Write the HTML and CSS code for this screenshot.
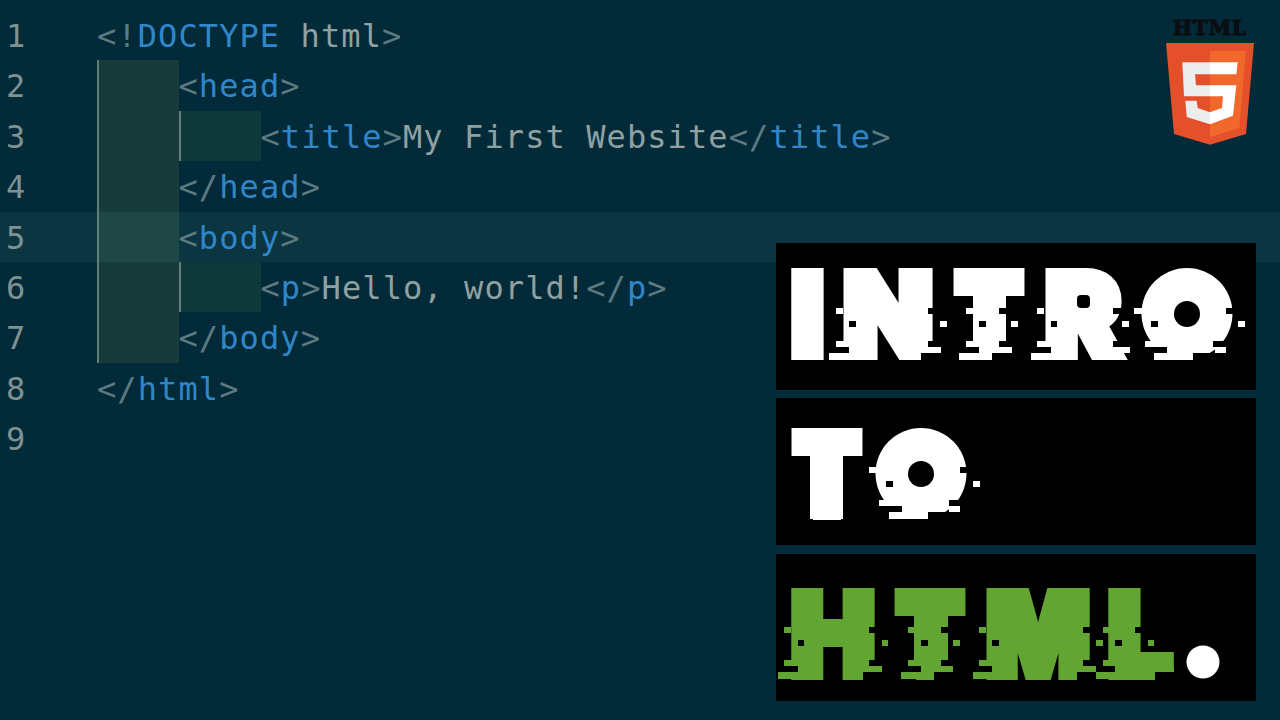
FILE: index.html
```html
<!DOCTYPE html>
<html lang="en">
<head>
<meta charset="utf-8">
<title>Intro to HTML</title>
<link rel="stylesheet" href="styles.css">
</head>
<body>
<main class="editor">
  <div class="line"><span class="num">1</span><span class="code"><i class="p">&lt;!</i><b>DOCTYPE</b><i class="t"> html</i><i class="p">&gt;</i></span></div>
  <div class="line"><span class="num">2</span><span class="code"><span class="ind outer"></span><i class="p">&lt;</i><b>head</b><i class="p">&gt;</i></span></div>
  <div class="line"><span class="num">3</span><span class="code"><span class="ind outer"></span><span class="ind inner"></span><i class="p">&lt;</i><b>title</b><i class="p">&gt;</i><i class="t">My First Website</i><i class="p">&lt;/</i><b>title</b><i class="p">&gt;</i></span></div>
  <div class="line"><span class="num">4</span><span class="code"><span class="ind outer"></span><i class="p">&lt;/</i><b>head</b><i class="p">&gt;</i></span></div>
  <div class="line current"><span class="num">5</span><span class="code"><span class="ind outer"></span><i class="p">&lt;</i><b>body</b><i class="p">&gt;</i></span></div>
  <div class="line"><span class="num">6</span><span class="code"><span class="ind outer"></span><span class="ind inner"></span><i class="p">&lt;</i><b>p</b><i class="p">&gt;</i><i class="t">Hello, world!</i><i class="p">&lt;/</i><b>p</b><i class="p">&gt;</i></span></div>
  <div class="line"><span class="num">7</span><span class="code"><span class="ind outer"></span><i class="p">&lt;/</i><b>body</b><i class="p">&gt;</i></span></div>
  <div class="line"><span class="num">8</span><span class="code"><i class="p">&lt;/</i><b>html</b><i class="p">&gt;</i></span></div>
  <div class="line"><span class="num">9</span><span class="code"></span></div>
</main>

<aside class="logo">
  <div class="logo-text">HTML</div>
  <svg class="shield" viewBox="18 10 264 306" aria-hidden="true">
    <path fill="#E4502A" d="M18 10H282L258 283 150 315 42 283Z"/>
    <path fill="#F0682C" d="M150 33H258L238 265 150 292Z"/>
    <path fill="#EDEDED" d="M67 68H150V104H105L108 137H150V170H72ZM76 183H110L113 205 150 218V254L80 232Z"/>
    <path fill="#FFF" d="M150 68H233L229 104H150ZM150 137H229L219 228 150 254V218L186 205 189 170H150Z"/>
  </svg>
</aside>

<section class="banners">
  <div class="banner first">
    <div class="word">
      <span class="ltr l-i">I</span><span class="ltr l-n">N</span><span class="ltr l-t">T</span><span class="ltr l-r">R</span><span class="ltr l-o">O</span>
    </div>
    <svg class="glitch" viewBox="776 243 480 147" aria-hidden="true">
      <circle cx="1187" cy="313.500" r="45.500" fill="#fff"/>
      <circle cx="1187" cy="314" r="13" fill="#000"/>
      <rect x="1140" y="353" width="14" height="8" fill="#000"/><rect x="1193" y="353" width="45" height="8" fill="#000"/>
      <rect x="1077" y="295" width="13" height="13" rx="4" fill="#000"/>
      <g fill="#fff">
        <rect x="973" y="290" width="33" height="70"/>
        <rect x="836" y="308" width="7" height="6"/><rect x="940" y="321" width="7" height="6"/><rect x="836" y="341" width="13" height="6"/><rect x="829" y="353" width="20" height="7"/><rect x="921" y="347" width="20" height="6"/>
        <rect x="966" y="308" width="7" height="6"/><rect x="1011" y="321" width="7" height="6"/><rect x="966" y="341" width="13" height="6"/><rect x="959" y="353" width="20" height="7"/><rect x="992" y="347" width="20" height="6"/>
        <rect x="1037" y="308" width="7" height="6"/><rect x="1122" y="321" width="7" height="6"/><rect x="1037" y="341" width="13" height="6"/><rect x="1031" y="353" width="20" height="7"/><rect x="1110" y="347" width="20" height="6"/>
        <rect x="1134" y="308" width="8" height="6"/><rect x="1238" y="321" width="7" height="6"/><rect x="1145" y="341" width="22" height="6"/><rect x="1154" y="353" width="39" height="7"/><rect x="1215" y="347" width="11" height="6"/>
      </g>
      <g fill="#000">
        <rect x="849" y="321" width="7" height="6"/><rect x="928" y="308" width="6" height="6"/><rect x="928" y="341" width="6" height="6"/><rect x="843" y="347" width="6" height="6"/><rect x="921" y="353" width="20" height="8"/>
        <rect x="979" y="321" width="7" height="6"/><rect x="999" y="308" width="7" height="6"/><rect x="999" y="341" width="7" height="6"/><rect x="973" y="347" width="6" height="6"/><rect x="992" y="353" width="20" height="8"/>
        <rect x="1051" y="321" width="6" height="6"/><rect x="1113" y="308" width="9" height="6"/><rect x="1113" y="341" width="9" height="6"/><rect x="1044" y="347" width="7" height="6"/>
        <rect x="1151" y="321" width="7" height="6"/><rect x="1226" y="308" width="8" height="6"/><rect x="1213" y="341" width="13" height="6"/><rect x="1152" y="347" width="15" height="6"/>
      </g>
    </svg>
  </div>
  <div class="banner">
    <div class="word">
      <span class="ltr l-t2">T</span><span class="ltr l-o2">O</span>
    </div>
    <svg class="glitch" viewBox="776 398 480 147" aria-hidden="true">
      <circle cx="921" cy="473.500" r="45.500" fill="#fff"/>
      <circle cx="921" cy="474" r="13" fill="#000"/>
      <rect x="870" y="512" width="19" height="9" fill="#000"/><rect x="928" y="512" width="44" height="9" fill="#000"/>
      <g fill="#fff"><rect x="810" y="450" width="33" height="69"/><rect x="869" y="467" width="7" height="6"/><rect x="973" y="481" width="7" height="6"/><rect x="879" y="500" width="23" height="6"/><rect x="889" y="512" width="39" height="7"/><rect x="949" y="506" width="11" height="6"/></g>
      <g fill="#000"><rect x="886" y="481" width="7" height="6"/><rect x="960" y="467" width="7" height="6"/><rect x="949" y="500" width="13" height="6"/><rect x="889" y="506" width="13" height="6"/></g>
    </svg>
  </div>
  <div class="banner">
    <div class="word">
      <span class="ltr green l-h">H</span><span class="ltr green l-t3">T</span><span class="ltr green l-m">M</span><span class="ltr green l-l">L</span>
    </div>
    <svg class="glitch" viewBox="776 554 480 147" aria-hidden="true">
      <circle cx="1203" cy="662" r="16.500" fill="#fff"/>
      <g fill="#63a533">
        <rect x="914" y="610" width="34" height="69"/>
        <rect x="784" y="627" width="7" height="6"/><rect x="882" y="640" width="6" height="6"/><rect x="784" y="660" width="14" height="6"/><rect x="778" y="672" width="20" height="7"/><rect x="863" y="666" width="19" height="6"/>
        <rect x="908" y="627" width="6" height="6"/><rect x="953" y="640" width="7" height="6"/><rect x="908" y="660" width="13" height="6"/><rect x="901" y="672" width="20" height="7"/><rect x="934" y="666" width="19" height="6"/>
        <rect x="979" y="627" width="7" height="6"/><rect x="1096" y="640" width="7" height="6"/><rect x="979" y="660" width="13" height="6"/><rect x="973" y="672" width="19" height="7"/><rect x="1077" y="666" width="19" height="6"/>
        <rect x="1103" y="627" width="6" height="6"/><rect x="1148" y="640" width="6" height="6"/><rect x="1103" y="660" width="12" height="6"/><rect x="1096" y="672" width="19" height="7"/>
        <rect x="1142" y="653" width="26" height="7"/><rect x="1142" y="660" width="19" height="6"/><rect x="1142" y="666" width="32" height="6"/><rect x="1115" y="672" width="40" height="7"/>
      </g>
      <g fill="#000">
        <rect x="798" y="640" width="6" height="6"/><rect x="869" y="627" width="6" height="6"/><rect x="869" y="660" width="6" height="6"/><rect x="791" y="666" width="7" height="6"/><rect x="863" y="672" width="14" height="8"/>
        <rect x="921" y="640" width="7" height="6"/><rect x="941" y="627" width="7" height="6"/><rect x="941" y="660" width="7" height="6"/><rect x="914" y="666" width="7" height="6"/><rect x="934" y="672" width="16" height="8"/>
        <rect x="992" y="640" width="7" height="6"/><rect x="1083" y="627" width="7" height="6"/><rect x="1083" y="660" width="7" height="6"/><rect x="986" y="666" width="6" height="6"/><rect x="1077" y="672" width="19" height="8"/>
        <rect x="1115" y="640" width="7" height="6"/><rect x="1135" y="627" width="7" height="6"/><rect x="1096" y="666" width="19" height="6"/>
        <rect x="1155" y="672" width="24" height="8"/>
      </g>
    </svg>
  </div>
</section>
</body>
</html>
```

FILE: styles.css
```css
* { box-sizing: border-box; }
html, body { margin: 0; height: 100%; }
body {
  width: 1280px;
  height: 720px;
  overflow: hidden;
  position: relative;
  background: #022a38;
}

.editor {
  padding-top: 10px;
  font-family: "DejaVu Sans Mono", monospace;
  font-size: 32px;
  letter-spacing: 1.09px;
  color: #8fa1a1;
}
.line {
  display: flex;
  height: 50.4px;
  line-height: 52px;
  white-space: pre;
}
.line.current { background: #0a3541; }
.num { width: 97px; padding-left: 6px; color: #7f9191; flex: none; }
.code { display: flex; flex: 1; }
.code i { font-style: normal; }
.code b { font-weight: normal; color: #2f87ca; }
.code .p { color: #5c7a80; }
.code .t { color: #8fa1a1; }
.ind { display: block; flex: none; height: 100%; border-left: 2px solid #5f7f7b; }
.ind.outer { width: 81.5px; background: #163b3a; }
.ind.inner { width: 82px; background: #0f3839; }
.current .ind.outer { background: #1e4745; }

.logo {
  position: absolute;
  left: 1166px;
  top: 17px;
  width: 88px;
  display: flex;
  flex-direction: column;
  align-items: center;
}
.logo-text {
  height: 26px;
  line-height: 22px;
  font-family: "DejaVu Serif", serif;
  font-weight: bold;
  font-size: 20px;
  letter-spacing: 1px;
  color: #0a0d12;
  -webkit-text-stroke: 1px #0a0d12;
}
.shield { display: block; width: 88px; height: 102px; }

.banners {
  position: absolute;
  left: 776px;
  top: 243px;
  width: 480px;
  display: flex;
  flex-direction: column;
}
.banner {
  position: relative;
  height: 147px;
  margin-bottom: 8px;
  background: #000;
}
.banner:last-child { margin-top: 1px; }
.word {
  display: flex;
  height: 100%;
  padding: 25px 0 0 15px;
  font-family: Inter, "Liberation Sans", sans-serif;
  font-weight: 900;
  font-size: 113px;
  line-height: 92px;
  color: #fff;
  -webkit-text-stroke: 10px currentColor;
}
.banner + .banner .word { padding-top: 30px; }
.banner:last-child .word { padding-top: 34px; }
.ltr { display: flex; justify-content: center; height: 92px; flex: none; }
.green { color: #63a533; }
.l-i { width: 33px; }
.l-n { width: 90px; margin-left: 19px; transform: scaleX(1.03); }
.l-t, .l-t2, .l-t3 { transform: scaleX(0.87); }
.l-t { width: 72px; margin-left: 20px; }
.l-r { width: 78px; margin-left: 19px; }
.l-o, .l-o2 { transform: scale(0.8); }
.l-o { width: 90px; margin-left: 20px; }
.l-t2 { width: 72px; }
.l-o2 { width: 90px; margin-left: 13px; }
.l-h { width: 84px; transform: scaleX(0.99); }
.l-t3 { width: 72px; margin-left: 19px; }
.l-m { width: 104px; margin-left: 20px; transform: scaleX(0.96); }
.l-l { width: 58px; margin-left: 21px; }

.glitch { position: absolute; left: 0; top: 0; width: 480px; height: 147px; display: block; }
```
